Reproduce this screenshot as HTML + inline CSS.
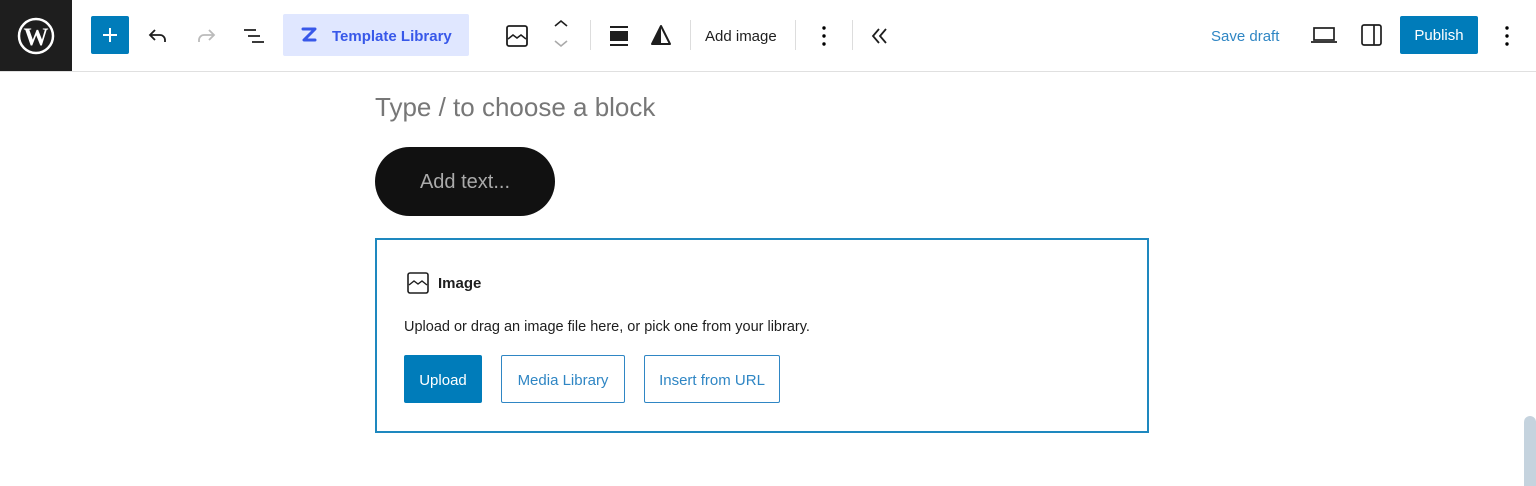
<!DOCTYPE html>
<html><head><style>
*{margin:0;padding:0;box-sizing:border-box}
body{width:1536px;height:480px;overflow:hidden;background:#fff;font-family:"Liberation Sans",sans-serif;color:#1e1e1e;position:relative}
.hdr{position:absolute;left:0;top:0;width:1536px;height:72px;border-bottom:1px solid #e0e0e0}
.a{position:absolute}
.wp{left:0;top:0;width:72px;height:71px;background:#1e1e1e}
.sep{position:absolute;top:20px;width:1px;height:30px;background:#ddd}
</style></head><body>
<div class="hdr">
<div class="a wp"><svg width="72" height="71" viewBox="0 0 72 71"><circle cx="36" cy="36" r="17" fill="none" stroke="#fff" stroke-width="2.5"/><text x="36" y="45" text-anchor="middle" fill="#fff" font-family="Liberation Serif" font-weight="bold" font-size="25">W</text></svg></div>
<div class="a" style="left:91px;top:16px;width:38px;height:38px;background:#007cba;border-radius:2px"><svg width="38" height="38"><path d="M19 12v14M12 19h14" stroke="#fff" stroke-width="2"/></svg></div>
<svg class="a" style="left:146px;top:24px" width="24" height="24"><path d="M9 6 4 11l5 5M4 11h10a5 5 0 0 1 5 5v2" fill="none" stroke="#1e1e1e" stroke-width="1.8"/></svg>
<svg class="a" style="left:194px;top:24px" width="24" height="24"><path d="M15 6l5 5-5 5M20 11H10a5 5 0 0 0-5 5v2" fill="none" stroke="#bbb" stroke-width="1.8"/></svg>
<svg class="a" style="left:242px;top:24px" width="24" height="24"><path d="M2 6h12M6 12h12M10 18h12" stroke="#1e1e1e" stroke-width="1.8"/></svg>
<div class="a" style="left:283px;top:14px;width:186px;height:42px;background:#e0e7ff;border-radius:2px"></div>
<svg class="a" style="left:299px;top:25px" width="20" height="20"><path d="M4 4h12L5 15h11" fill="none" stroke="#3858e9" stroke-width="3" stroke-linejoin="round" stroke-linecap="round"/></svg>
<div class="a" style="left:332px;top:28px;font-size:15px;font-weight:bold;color:#3858e9">Template Library</div>
<svg class="a" style="left:505px;top:24px" width="24" height="24"><rect x="2" y="2" width="20" height="20" rx="2" fill="none" stroke="#1e1e1e" stroke-width="1.8"/><path d="M3 15l5-4 4 3 4-3 5 4" fill="none" stroke="#1e1e1e" stroke-width="1.5"/></svg>
<svg class="a" style="left:551px;top:18px" width="20" height="32"><path d="M4 8l6-5 6 5" fill="none" stroke="#1e1e1e" stroke-width="1.6"/><path d="M4 23l6 5 6-5" fill="none" stroke="#aaa" stroke-width="1.6"/></svg>
<div class="sep" style="left:590px"></div>
<svg class="a" style="left:608px;top:24px" width="22" height="24"><path d="M2 3h18M2 21h18" stroke="#1e1e1e" stroke-width="2"/><rect x="2" y="7" width="18" height="10" fill="#1e1e1e"/></svg>
<svg class="a" style="left:650px;top:24px" width="22" height="22"><path d="M11 2 2 20h18z" fill="none" stroke="#1e1e1e" stroke-width="2" stroke-linejoin="round"/><path d="M11 2 2 20h9z" fill="#1e1e1e"/></svg>
<div class="sep" style="left:690px"></div>
<div class="a" style="left:705px;top:28px;font-size:15px">Add image</div>
<div class="sep" style="left:795px"></div>
<svg class="a" style="left:814px;top:24px" width="20" height="24"><circle cx="10" cy="4" r="1.7"/><circle cx="10" cy="12" r="1.7"/><circle cx="10" cy="20" r="1.7"/></svg>
<div class="sep" style="left:852px"></div>
<svg class="a" style="left:870px;top:26px" width="20" height="20"><path d="M9 3 3 10l6 7M16 3l-6 7 6 7" fill="none" stroke="#1e1e1e" stroke-width="1.8"/></svg>
<div class="a" style="left:1211px;top:28px;font-size:15px;color:#2f86c4">Save draft</div>
<svg class="a" style="left:1311px;top:24px" width="26" height="22"><rect x="3" y="4" width="20" height="12" fill="none" stroke="#1e1e1e" stroke-width="1.7"/><path d="M0 18h26" stroke="#1e1e1e" stroke-width="1.7"/></svg>
<svg class="a" style="left:1361px;top:24px" width="22" height="22"><rect x="1" y="1" width="19" height="20" rx="2" fill="none" stroke="#1e1e1e" stroke-width="1.7"/><path d="M13 1v20" stroke="#1e1e1e" stroke-width="1.7"/></svg>
<div class="a" style="left:1400px;top:16px;width:78px;height:38px;background:#007cba;border-radius:2px;color:#fff;font-size:15px;text-align:center;line-height:40px">Publish</div>
<svg class="a" style="left:1497px;top:24px" width="20" height="24"><circle cx="10" cy="4" r="1.7"/><circle cx="10" cy="12" r="1.7"/><circle cx="10" cy="20" r="1.7"/></svg>
</div>
<div class="a" style="left:375px;top:92px;font-size:26px;color:#777">Type / to choose a block</div>
<div class="a" style="left:375px;top:147px;width:180px;height:69px;background:#111;border-radius:35px;color:#aaa;font-size:20px;text-align:center;line-height:71px">Add text...</div>
<div class="a" style="left:375px;top:238px;width:774px;height:195px;border:2px solid #1e88bf"></div>
<svg class="a" style="left:407px;top:272px" width="22" height="22"><rect x="1" y="1" width="20" height="20" rx="2" fill="none" stroke="#1e1e1e" stroke-width="1.6"/><path d="M2 13l5-4 4 3 4-3 5 4" fill="none" stroke="#1e1e1e" stroke-width="1.4"/></svg>
<div class="a" style="left:438px;top:275px;font-size:15px;font-weight:bold">Image</div>
<div class="a" style="left:404px;top:319px;font-size:14.5px">Upload or drag an image file here, or pick one from your library.</div>
<div class="a" style="left:404px;top:355px;width:78px;height:48px;background:#007cba;border-radius:2px;color:#fff;font-size:15px;text-align:center;line-height:51px">Upload</div>
<div class="a" style="left:501px;top:355px;width:124px;height:48px;border:1px solid #2f86c4;border-radius:2px;color:#2f86c4;font-size:15px;text-align:center;line-height:49px">Media Library</div>
<div class="a" style="left:644px;top:355px;width:136px;height:48px;border:1px solid #2f86c4;border-radius:2px;color:#2f86c4;font-size:15px;text-align:center;line-height:49px">Insert from URL</div>
<div class="a" style="left:1524px;top:416px;width:12px;height:70px;background:#c5d3de;border-radius:6px 6px 0 0"></div>
</body></html>
